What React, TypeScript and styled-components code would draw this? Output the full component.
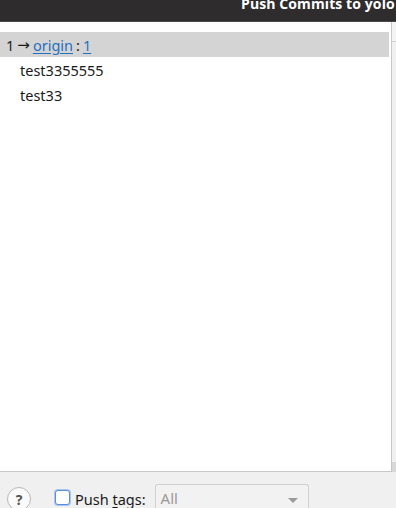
import React from "react";
import styled, { createGlobalStyle } from "styled-components";

const Global = createGlobalStyle`
  html, body { margin: 0; padding: 0; background: #f0f0f0; }
  body { font-family: "Noto Sans", "Open Sans", sans-serif; color: #1a1a1a; }
  #root { width: 396px; height: 508px; overflow: hidden; }
`;

const Window = styled.div`
  width: 396px;
  height: 508px;
  display: flex;
  flex-direction: column;
  background: #f0f0f0;
  overflow: hidden;
`;

const TitleBar = styled.div`
  height: 21px;
  flex: none;
  background: #2e2c2c;
  border-bottom: 1px solid #4a4848;
  display: flex;
  align-items: flex-start;
  padding-left: 241px;
  overflow: hidden;
  white-space: nowrap;
`;

const Title = styled.span`
  color: #ffffff;
  font-family: "Open Sans", "DejaVu Sans", sans-serif;
  font-weight: 700;
  font-size: 14px;
  line-height: 14px;
  margin-top: -3px;
  letter-spacing: 0.1px;
`;

const Body = styled.div`
  flex: 1;
  display: flex;
  min-height: 0;
`;

const ListPanel = styled.div`
  width: 392px;
  flex: none;
  background: #ffffff;
  border-right: 1px solid #c8c8c8;
  border-bottom: 1px solid #c8c8c8;
  padding-top: 10px;
  box-sizing: border-box;
  height: 450px;
`;

const Side = styled.div`
  flex: 1;
  display: flex;
  flex-direction: column;
  height: 450px;
`;

const SideTop = styled.div`
  height: 19px;
  border-bottom: 1px solid #d0d0d0;
  background: #f4f4f4;
`;

const SideFill = styled.div`
  flex: 1;
`;

const SideThumb = styled.div`
  height: 10px;
  background: #d8d8d8;
`;

const HeaderRow = styled.div`
  height: 25px;
  background: #d4d4d4;
  display: flex;
  align-items: center;
  padding-left: 6px;
  font-size: 14.5px;
  margin-right: 2px;
`;

const Arrow = styled.span`
  font-family: "DejaVu Sans", sans-serif;
  font-size: 15px;
  margin: 0 3px 0 3px;
`;

const Link = styled.a`
  color: #2470c0;
  text-decoration: underline;
  text-underline-offset: 2px;
`;

const Colon = styled.span`
  margin: 0 3px;
`;

const CommitRow = styled.div`
  height: 25px;
  display: flex;
  align-items: center;
  padding-left: 20px;
  font-size: 14.5px;
`;

const Footer = styled.div`
  flex: none;
  height: 36px;
  display: flex;
  align-items: flex-end;
  padding-left: 7px;
  box-sizing: border-box;
`;

const HelpButton = styled.div`
  width: 22px;
  height: 22px;
  border-radius: 50%;
  border: 1px solid #b8b8b8;
  background: #fafafa;
  display: flex;
  align-items: center;
  justify-content: center;
  font-size: 14px;
  font-weight: 700;
  color: #555;
  margin-bottom: -3px;
`;

const Check = styled.div`
  width: 13px;
  height: 13px;
  border: 1.5px solid #5a8fd8;
  border-radius: 3px;
  background: #fff;
  box-shadow: 0 0 0 1px #a9c6ee;
  margin-left: 24px;
  margin-bottom: 3px;
`;

const Label = styled.span`
  font-size: 14.5px;
  margin-left: 5px;
  line-height: 20px;
  margin-bottom: -1px;
`;

const Mnemonic = styled.span`
  text-decoration: underline;
  text-underline-offset: 2px;
`;

const Select = styled.div`
  margin-left: 9px;
  width: 154px;
  height: 24px;
  border: 1px solid #cfcfcf;
  border-bottom: none;
  border-radius: 3px 3px 0 0;
  background: #f2f2f2;
  box-sizing: border-box;
  display: flex;
  align-items: flex-start;
  justify-content: space-between;
  padding: 3px 10px 0 5px;
`;

const SelectText = styled.span`
  color: #9a9a9a;
  font-size: 15px;
  line-height: 20px;
`;

const Caret = styled.span`
  width: 0;
  height: 0;
  border-left: 5px solid transparent;
  border-right: 5px solid transparent;
  border-top: 5px solid #9a9a9a;
  margin-top: 10px;
`;

export default function App() {
  return (
    <>
      <Global />
      <Window>
        <TitleBar>
          <Title>Push Commits to yolo</Title>
        </TitleBar>
        <Body>
          <ListPanel>
            <HeaderRow>
              1<Arrow>→</Arrow>
              <Link>origin</Link>
              <Colon>:</Colon>
              <Link>1</Link>
            </HeaderRow>
            <CommitRow>test3355555</CommitRow>
            <CommitRow>test33</CommitRow>
          </ListPanel>
          <Side>
            <SideTop />
            <SideFill />
            <SideThumb />
          </Side>
        </Body>
        <Footer>
          <HelpButton>?</HelpButton>
          <Check />
          <Label>
            Push <Mnemonic>t</Mnemonic>ags:
          </Label>
          <Select>
            <SelectText>All</SelectText>
            <Caret />
          </Select>
        </Footer>
      </Window>
    </>
  );
}
